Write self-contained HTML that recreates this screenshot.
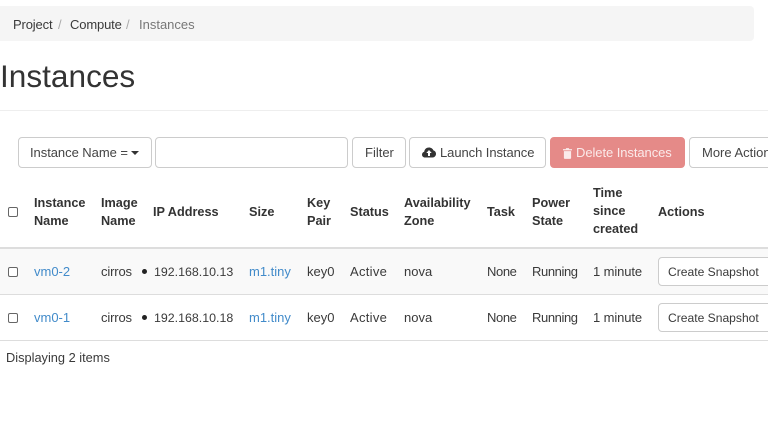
<!DOCTYPE html>
<html><head><meta charset="utf-8"><style>
html,body{margin:0;padding:0;background:#fff;}
#p{position:relative;width:768px;height:423px;overflow:hidden;font-family:"Liberation Sans",sans-serif;font-size:13px;color:#3a3a3a;filter:blur(.35px);}
.t{position:absolute;white-space:nowrap;line-height:18px;}
.b{font-weight:bold;font-size:12.7px;color:#333;}
.a{color:#428bca;}
.box{position:absolute;box-sizing:border-box;border:1px solid #ccc;border-radius:4px;background:#fff;}
.cb{position:absolute;box-sizing:border-box;width:10px;height:10px;border:1.5px solid #666;border-radius:2px;background:#fff;left:8px;}
.r{position:absolute;left:0;width:768px;}
.dot{position:absolute;left:142px;width:5px;height:5px;border-radius:50%;background:#222;}
.ip{font-size:12.4px;}
.ac{letter-spacing:.3px;}
.ru{letter-spacing:-.4px;}
.no{letter-spacing:-.4px;}
.mi{letter-spacing:-.1px;}
</style></head><body><div id="p">
<div style="position:absolute;left:-5px;top:6px;width:759px;height:35px;background:#f5f5f5;border-radius:4px;"></div>
<div class="t" style="left:13px;top:16px;letter-spacing:-.15px;">Project</div>
<div class="t" style="left:58px;top:16px;color:#aaa;">/</div>
<div class="t" style="left:70px;top:16px;letter-spacing:-.15px;">Compute</div>
<div class="t" style="left:126px;top:16px;color:#aaa;">/</div>
<div class="t" style="left:139px;top:16px;color:#777;">Instances</div>
<div class="t" style="left:0;top:57px;font-size:31.6px;line-height:38px;color:#333;">Instances</div>
<div class="r" style="top:110px;height:1px;background:#eee;"></div>

<div class="box" style="left:18px;top:137px;width:134px;height:31px;"></div>
<div class="t" style="left:30px;top:144px;color:#444;letter-spacing:-.05px;">Instance Name =</div>
<div style="position:absolute;left:131px;top:151px;width:0;height:0;border-left:4px solid transparent;border-right:4px solid transparent;border-top:4px solid #333;"></div>
<div class="box" style="left:155px;top:137px;width:193px;height:31px;"></div>
<div class="box" style="left:352px;top:137px;width:54px;height:31px;"></div>
<div class="t" style="left:365px;top:144px;color:#444;">Filter</div>
<div class="box" style="left:409px;top:137px;width:137px;height:31px;"></div>
<svg style="position:absolute;left:422px;top:147px;" width="14" height="11" viewBox="0 0 14 11"><path d="M3 10.500C1.200 10.500 0 9.200 0 7.600 0 6.200 1 5.100 2.200 4.800 2.500 2.200 4.500.5 7 .5c2 0 3.700 1.100 4.400 2.900C13 3.800 14 5.200 14 6.900c0 2-1.500 3.600-3.500 3.600z" fill="#333"/><path d="M7 3 4.300 6H6v3h2V6h1.700z" fill="#fff"/></svg>
<div class="t" style="left:440px;top:144px;color:#444;letter-spacing:-.07px;">Launch Instance</div>
<div class="box" style="left:550px;top:137px;width:135px;height:31px;background:#e58a88;border-color:#e58a88;"></div>
<svg style="position:absolute;left:563px;top:148px;" width="9" height="11" viewBox="0 0 10 12"><path d="M3.500 0h3l.5 1.200H10v1.300H0V1.200h3zM1 3.300h8V11a1 1 0 0 1-1 1H2a1 1 0 0 1-1-1z" fill="#fbeaea"/></svg>
<div class="t" style="left:576px;top:144px;color:#fbeaea;letter-spacing:-.07px;">Delete Instances</div>
<div class="box" style="left:689px;top:137px;width:110px;height:31px;"></div>
<div class="t" style="left:702px;top:144px;color:#444;">More Actions</div>

<div class="cb" style="top:207px;"></div>
<div class="t b" style="left:34px;top:194px;">Instance<br>Name</div>
<div class="t b" style="left:101px;top:194px;">Image<br>Name</div>
<div class="t b" style="left:153px;top:203px;">IP Address</div>
<div class="t b" style="left:249px;top:203px;">Size</div>
<div class="t b" style="left:307px;top:194px;">Key<br>Pair</div>
<div class="t b" style="left:350px;top:203px;">Status</div>
<div class="t b" style="left:404px;top:194px;">Availability<br>Zone</div>
<div class="t b" style="left:487px;top:203px;">Task</div>
<div class="t b" style="left:532px;top:194px;">Power<br>State</div>
<div class="t b" style="left:593px;top:184px;">Time<br>since<br>created</div>
<div class="t b" style="left:658px;top:203px;">Actions</div>

<div class="r" style="top:247px;height:2px;background:#ddd;"></div>
<div class="r" style="top:249px;height:45px;background:#f9f9f9;"></div>
<div class="r" style="top:294px;height:1px;background:#ddd;"></div>
<div class="r" style="top:340px;height:1px;background:#ddd;"></div>

<div class="cb" style="top:267px;"></div>
<div class="t a" style="left:34px;top:263px;">vm0-2</div>
<div class="t" style="left:101px;top:263px;letter-spacing:-.15px;">cirros</div>
<div class="dot" style="top:269px;"></div>
<div class="t ip" style="left:154px;top:263px;">192.168.10.13</div>
<div class="t a" style="left:249px;top:263px;">m1.tiny</div>
<div class="t" style="left:307px;top:263px;">key0</div>
<div class="t ac" style="left:350px;top:263px;">Active</div>
<div class="t" style="left:404px;top:263px;">nova</div>
<div class="t no" style="left:487px;top:263px;">None</div>
<div class="t ru" style="left:532px;top:263px;">Running</div>
<div class="t mi" style="left:593px;top:263px;">1 minute</div>
<div class="box" style="left:658px;top:257px;width:130px;height:29px;"></div>
<div class="t" style="left:668px;top:263px;font-size:12.100px;">Create Snapshot</div>

<div class="cb" style="top:313px;"></div>
<div class="t a" style="left:34px;top:309px;">vm0-1</div>
<div class="t" style="left:101px;top:309px;letter-spacing:-.15px;">cirros</div>
<div class="dot" style="top:315px;"></div>
<div class="t ip" style="left:154px;top:309px;">192.168.10.18</div>
<div class="t a" style="left:249px;top:309px;">m1.tiny</div>
<div class="t" style="left:307px;top:309px;">key0</div>
<div class="t ac" style="left:350px;top:309px;">Active</div>
<div class="t" style="left:404px;top:309px;">nova</div>
<div class="t no" style="left:487px;top:309px;">None</div>
<div class="t ru" style="left:532px;top:309px;">Running</div>
<div class="t mi" style="left:593px;top:309px;">1 minute</div>
<div class="box" style="left:658px;top:303px;width:130px;height:29px;"></div>
<div class="t" style="left:668px;top:309px;font-size:12.100px;">Create Snapshot</div>

<div class="t" style="left:6px;top:349px;font-size:12.800px;">Displaying 2 items</div>
</div></body></html>
